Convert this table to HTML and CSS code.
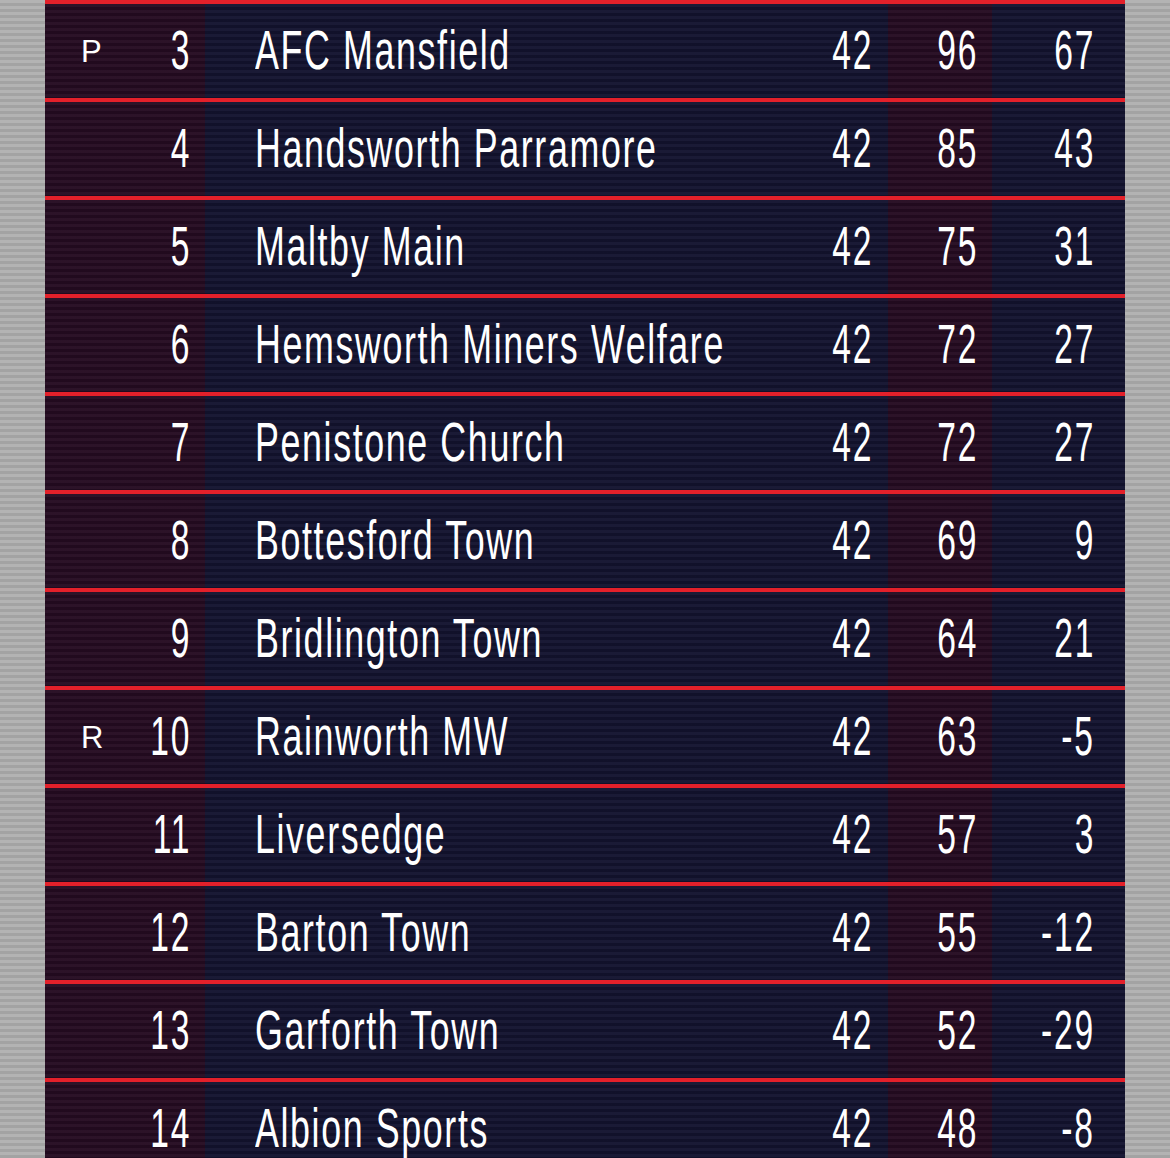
FILE: index.html
```html
<!DOCTYPE html>
<html>
<head>
<meta charset="utf-8">
<link rel="stylesheet" href="styles.css">
</head>
<body>
<div class="page">
  <div class="table">
    <div class="row"><div class="c flag">P</div><div class="c pos"><span class="n">3</span></div><div class="c name"><span class="t">AFC Mansfield</span></div><div class="c pl"><span class="n">42</span></div><div class="c pts"><span class="n">96</span></div><div class="c gd"><span class="n">67</span></div></div>
    <div class="row"><div class="c flag"></div><div class="c pos"><span class="n">4</span></div><div class="c name"><span class="t">Handsworth Parramore</span></div><div class="c pl"><span class="n">42</span></div><div class="c pts"><span class="n">85</span></div><div class="c gd"><span class="n">43</span></div></div>
    <div class="row"><div class="c flag"></div><div class="c pos"><span class="n">5</span></div><div class="c name"><span class="t">Maltby Main</span></div><div class="c pl"><span class="n">42</span></div><div class="c pts"><span class="n">75</span></div><div class="c gd"><span class="n">31</span></div></div>
    <div class="row"><div class="c flag"></div><div class="c pos"><span class="n">6</span></div><div class="c name"><span class="t">Hemsworth Miners Welfare</span></div><div class="c pl"><span class="n">42</span></div><div class="c pts"><span class="n">72</span></div><div class="c gd"><span class="n">27</span></div></div>
    <div class="row"><div class="c flag"></div><div class="c pos"><span class="n">7</span></div><div class="c name"><span class="t">Penistone Church</span></div><div class="c pl"><span class="n">42</span></div><div class="c pts"><span class="n">72</span></div><div class="c gd"><span class="n">27</span></div></div>
    <div class="row"><div class="c flag"></div><div class="c pos"><span class="n">8</span></div><div class="c name"><span class="t">Bottesford Town</span></div><div class="c pl"><span class="n">42</span></div><div class="c pts"><span class="n">69</span></div><div class="c gd"><span class="n">9</span></div></div>
    <div class="row"><div class="c flag"></div><div class="c pos"><span class="n">9</span></div><div class="c name"><span class="t">Bridlington Town</span></div><div class="c pl"><span class="n">42</span></div><div class="c pts"><span class="n">64</span></div><div class="c gd"><span class="n">21</span></div></div>
    <div class="row"><div class="c flag">R</div><div class="c pos"><span class="n">10</span></div><div class="c name"><span class="t">Rainworth MW</span></div><div class="c pl"><span class="n">42</span></div><div class="c pts"><span class="n">63</span></div><div class="c gd"><span class="n">-5</span></div></div>
    <div class="row"><div class="c flag"></div><div class="c pos"><span class="n">11</span></div><div class="c name"><span class="t">Liversedge</span></div><div class="c pl"><span class="n">42</span></div><div class="c pts"><span class="n">57</span></div><div class="c gd"><span class="n">3</span></div></div>
    <div class="row"><div class="c flag"></div><div class="c pos"><span class="n">12</span></div><div class="c name"><span class="t">Barton Town</span></div><div class="c pl"><span class="n">42</span></div><div class="c pts"><span class="n">55</span></div><div class="c gd"><span class="n">-12</span></div></div>
    <div class="row"><div class="c flag"></div><div class="c pos"><span class="n">13</span></div><div class="c name"><span class="t">Garforth Town</span></div><div class="c pl"><span class="n">42</span></div><div class="c pts"><span class="n">52</span></div><div class="c gd"><span class="n">-29</span></div></div>
    <div class="row"><div class="c flag"></div><div class="c pos"><span class="n">14</span></div><div class="c name"><span class="t">Albion Sports</span></div><div class="c pl"><span class="n">42</span></div><div class="c pts"><span class="n">48</span></div><div class="c gd"><span class="n">-8</span></div></div>
  </div>
</div>
</body>
</html>
```
FILE: styles.css
```css
html, body {
  margin: 0;
  padding: 0;
  height: 100%;
  overflow: hidden;
}
body {
  background: #a9a9a9 repeating-linear-gradient(to bottom, #b3b3b3 0px, #b3b3b3 3px, #a3a3a3 3px, #a3a3a3 6px);
  font-family: "Liberation Sans", Arial, sans-serif;
  color: #fff;
}
.page {
  padding: 0 45px;
}
.table {
  display: flex;
  flex-direction: column;
}
.row {
  display: grid;
  grid-template-columns: 80px 80px 585px 98px 104px 133px;
  height: 94px;
  border-top: 4px solid #e3202a;
}
.c {
  display: flex;
  align-items: center;
  white-space: nowrap;
}
.flag, .pos, .pts {
  background-color: #250b21;
  background-image: repeating-linear-gradient(to bottom, rgba(255,255,255,0.03) 0px, rgba(255,255,255,0.03) 3px, rgba(0,0,0,0.1) 3px, rgba(0,0,0,0.1) 6px);
}
.name, .pl, .gd {
  background-color: #13132f;
  background-image: repeating-linear-gradient(to bottom, rgba(255,255,255,0.03) 0px, rgba(255,255,255,0.03) 3px, rgba(0,0,0,0.1) 3px, rgba(0,0,0,0.1) 6px);
}
.flag {
  padding-left: 36px;
  font-size: 31px;
  padding-top: 2px;
}
.pos, .pl, .pts, .gd {
  justify-content: flex-end;
}
.pos { padding-right: 14px; }
.pl { padding-right: 15px; }
.pts { padding-right: 14px; }
.gd { padding-right: 30px; }
.name { padding-left: 50px; }
.n, .t {
  display: inline-block;
  font-size: 56px;
  line-height: 1;
  padding-bottom: 2px;
}
.n {
  transform: scaleX(0.6);
  transform-origin: right center;
  letter-spacing: 3px;
}
.t {
  transform: scaleX(0.64);
  transform-origin: left center;
  letter-spacing: 2.5px;
}
```
